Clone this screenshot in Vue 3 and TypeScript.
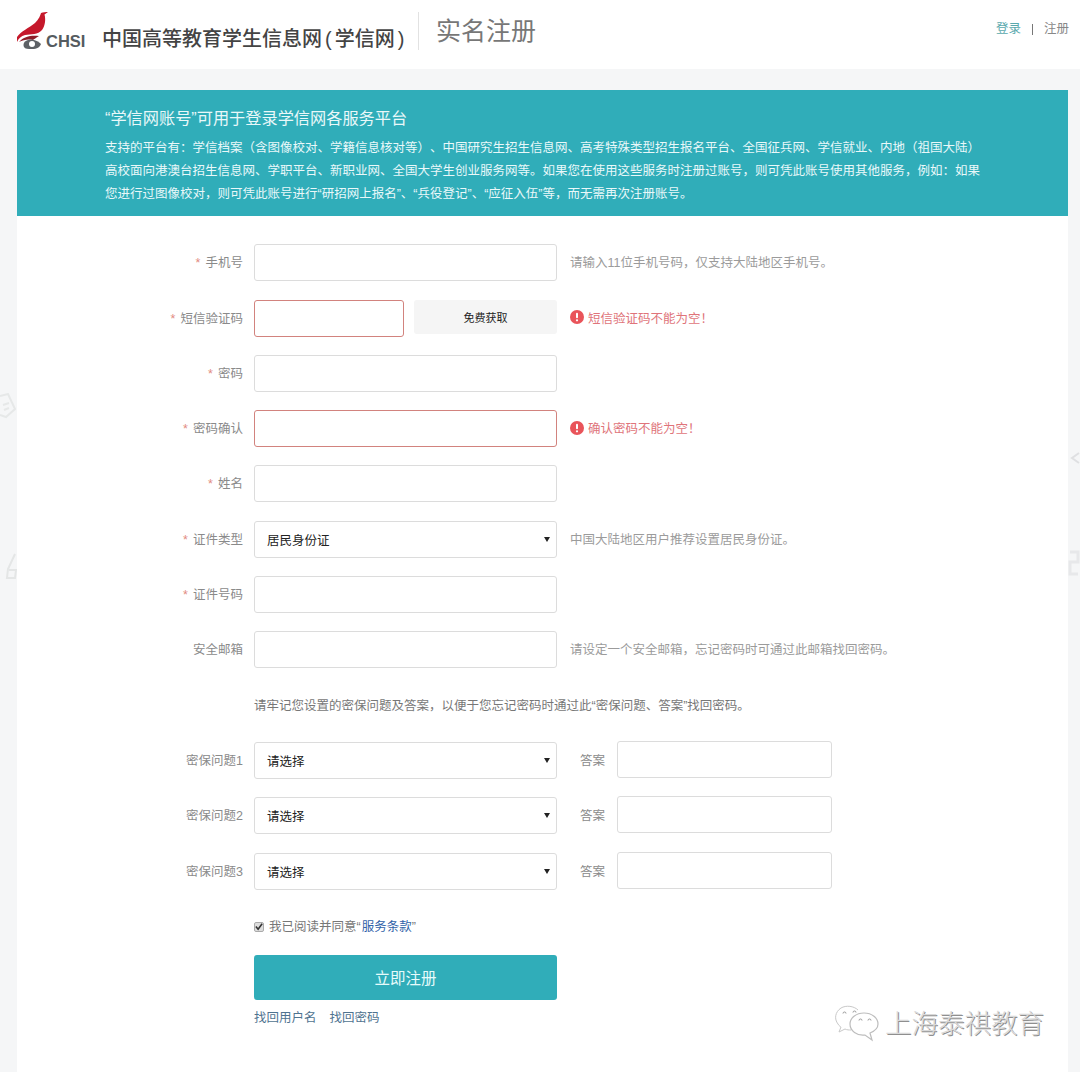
<script setup lang="ts">
interface Row {
  label: string
  required: boolean
  kind: 'input' | 'sms' | 'select'
  error?: boolean
  hint?: string
  errorText?: string
  value?: string
}
const rows: Row[] = [
  { label: '手机号', required: true, kind: 'input', hint: '请输入11位手机号码，仅支持大陆地区手机号。' },
  { label: '短信验证码', required: true, kind: 'sms', error: true, errorText: '短信验证码不能为空！' },
  { label: '密码', required: true, kind: 'input' },
  { label: '密码确认', required: true, kind: 'input', error: true, errorText: '确认密码不能为空！' },
  { label: '姓名', required: true, kind: 'input' },
  { label: '证件类型', required: true, kind: 'select', value: '居民身份证', hint: '中国大陆地区用户推荐设置居民身份证。' },
  { label: '证件号码', required: true, kind: 'input' },
  { label: '安全邮箱', required: false, kind: 'input', hint: '请设定一个安全邮箱，忘记密码时可通过此邮箱找回密码。' },
]
const questions = ['密保问题1', '密保问题2', '密保问题3']
</script>

<template>
  <div class="page">
    <header class="top">
      <div class="brand">
        <svg class="logo" width="74" height="40" viewBox="0 0 74 40">
          <path d="M2 26C6 20 14 17 20 12C24 8 25 5 26 2C28 1 31 1 33 1L29.500 3.500C31 9 30 15 27 19C23 24 16 23 10 24C6 25 4 27 2 31Z" fill="#c5182b" />
          <path d="M4 31C9 25 17 24 24 25C21 27 19 28 18 29C13 28 8 29 4 31Z" fill="#8d1d28" />
          <path d="M9 36C7 32 11 28 17 28.500C21 29 24 31 26 33C25 36 22 38 17 38C13 38 10 38 9 36Z" fill="#5d6165" />
          <circle cx="17" cy="33" r="3" fill="#fff" />
          <text x="31" y="36" class="chsi">CHSI</text>
        </svg>
        <span class="site">中国高等教育学生信息网<em>(</em>学信网<em>)</em></span>
        <span class="divider"></span>
        <span class="page-title">实名注册</span>
      </div>
      <nav class="nav">
        <a class="login">登录</a>
        <span class="sep"></span>
        <a class="reg">注册</a>
      </nav>
    </header>

    <main class="card">
      <section class="banner">
        <h1>“学信网账号”可用于登录学信网各服务平台</h1>
        <p>支持的平台有：学信档案（含图像校对、学籍信息核对等）、中国研究生招生信息网、高考特殊类型招生报名平台、全国征兵网、学信就业、内地（祖国大陆）</p>
        <p>高校面向港澳台招生信息网、学职平台、新职业网、全国大学生创业服务网等。如果您在使用这些服务时注册过账号，则可凭此账号使用其他服务，例如：如果</p>
        <p>您进行过图像校对，则可凭此账号进行“研招网上报名”、“兵役登记”、“应征入伍”等，而无需再次注册账号。</p>
      </section>

      <form class="form" @submit.prevent>
        <div class="rows main">
          <div v-for="r in rows" :key="r.label" class="row">
            <label class="label"><i v-if="r.required">*</i>{{ r.label }}</label>
            <div v-if="r.kind === 'sms'" class="field sms">
              <input class="input bad" type="text" />
              <button type="button" class="code">免费获取</button>
            </div>
            <div v-else-if="r.kind === 'select'" class="field select">
              <span>{{ r.value }}</span><b class="caret"></b>
            </div>
            <div v-else class="field">
              <input class="input" :class="{ bad: r.error }" type="text" />
            </div>
            <span v-if="r.hint" class="hint">{{ r.hint }}</span>
            <span v-if="r.errorText" class="err">
              <svg width="14" height="14" viewBox="0 0 14 14">
                <circle cx="7" cy="7" r="7" fill="#e9545a" />
                <rect x="6" y="2.800" width="2" height="5.400" rx="1" fill="#fff" />
                <circle cx="7" cy="10.300" r="1.100" fill="#fff" />
              </svg>
              {{ r.errorText }}
            </span>
          </div>
        </div>

        <p class="note">请牢记您设置的密保问题及答案，以便于您忘记密码时通过此“密保问题、答案”找回密码。</p>

        <div class="rows questions">
          <div v-for="q in questions" :key="q" class="row">
            <label class="label">{{ q }}</label>
            <div class="field select"><span>请选择</span><b class="caret"></b></div>
            <span class="answer-label">答案</span>
            <input class="input answer" type="text" />
          </div>
        </div>

        <div class="agree">
          <span class="check">
            <svg width="9" height="9" viewBox="0 0 9 9"><path d="M1 4.500L3.500 7.500L8 1.500" fill="none" stroke="#333" stroke-width="1.800" /></svg>
          </span>
          <span>我已阅读并同意“</span><span class="terms">服务条款</span><span>”</span>
        </div>
        <button type="button" class="submit">立即注册</button>
        <div class="links"><a>找回用户名</a><a>找回密码</a></div>
      </form>
    </main>

    <svg class="deco deco-l1" width="16" height="26" viewBox="0 0 16 26"><path d="M0 3L8 1L15 16L6 24L0 22" fill="none" stroke="#e6e8e8" stroke-width="2" /><path d="M3 12L9 10M4 17L9 15" stroke="#e6e8e8" stroke-width="2" /></svg>
    <svg class="deco deco-l2" width="12" height="28" viewBox="0 0 12 28"><path d="M10 1L3 16L2 25H10L11 17H4" fill="none" stroke="#e4e6e6" stroke-width="2" /></svg>
    <svg class="deco deco-r1" width="10" height="12" viewBox="0 0 10 12"><path d="M9 1L2 6L9 11" fill="none" stroke="#dfe0e2" stroke-width="2" /></svg>
    <svg class="deco deco-r2" width="12" height="30" viewBox="0 0 12 30"><path d="M2 2H10V12H2V24H10" fill="none" stroke="#e7e8ea" stroke-width="3" /></svg>

    <div class="mark">
      <svg width="46" height="38" viewBox="0 0 46 38">
        <path d="M24 5C20 1 12 0 7 3C1 7 0 14 4 19C5 21 7 22 7 22L5 27L11 24C13 25 15 25 17 25" fill="#fff" stroke="#c9c9c9" stroke-width="1" />
        <path d="M30 8C22 8 16 13 16 19C16 26 23 31 31 30L38 35L36 28C41 26 44 23 44 19C44 13 38 8 30 8Z" fill="#fff" stroke="#bdbdbd" stroke-width="1.200" />
        <path d="M9 8.500A1.500 1.500 0 0 1 12 8.500M19 7.500A1.500 1.500 0 0 1 22 7.500M25 15.500A1.500 1.500 0 0 1 28 15.500M34 15.500A1.500 1.500 0 0 1 37 15.500" fill="none" stroke="#999" stroke-width="1" />
      </svg>
      <span>上海泰祺教育</span>
    </div>
  </div>
</template>

<style>
html, body { margin: 0; background: #f5f6f7; }
</style>

<style scoped>
.page {
  position: relative;
  width: 1080px;
  height: 1072px;
  overflow: hidden;
  background: #f5f6f7;
  font-family: "Liberation Sans", "Noto Sans CJK SC", sans-serif;
  font-size: 12.500px;
  color: #888;
  text-spacing-trim: space-all;
}
.top {
  height: 69px;
  background: #fff;
  display: flex;
  justify-content: space-between;
  align-items: flex-start;
}
.brand { display: flex; align-items: flex-start; padding-left: 15px; }
.logo { margin-top: 11px; flex: none; }
.chsi { font: 700 16.500px "Liberation Sans", sans-serif; fill: #555b60; }
.site {
  margin-left: 13px;
  margin-top: 25px;
  font-size: 20px;
  line-height: 28px;
  font-weight: 500;
  color: #444;
  white-space: nowrap;
  width: 303px;
}
.site em { font-style: normal; margin: 0 3px; font-weight: 400; }
.divider { width: 1px; height: 38px; margin: 12px 0 0 13px; background: #e2e2e2; }
.page-title {
  margin: 13px 0 0 17px;
  font-size: 25px;
  line-height: 36px;
  color: #777;
  font-weight: 400;
}
.nav { display: flex; align-items: center; margin: 21px 11px 0 0; line-height: 16px; }
.login { color: #5aa9ad; }
.sep { width: 1px; height: 11px; background: #777; margin: 0 11px; }
.reg { color: #888; }
.card { margin: 21px 12px 0 17px; background: #fff; height: 982px; }
.banner {
  height: 126px;
  box-sizing: border-box;
  padding: 17px 0 0 88px;
  background: #30adb9;
  color: #e9f8f9;
}
.banner h1 { margin: 0 0 8px; font-size: 16.200px; line-height: 22px; font-weight: 400; white-space: nowrap; }
.banner p { margin: 0; font-size: 12.500px; line-height: 23px; white-space: nowrap; }
.form { padding-top: 28px; }
.rows { display: flex; flex-direction: column; gap: 18.220px; }
.questions { gap: 18.400px; }
.main .row:nth-child(2) { margin-top: 0.500px; }
.row { display: flex; align-items: center; height: 37px; }
.label { width: 226px; text-align: right; margin-right: 11px; padding-bottom: 2px; white-space: nowrap; color: #8a8a8a; }
.label i { font-style: normal; color: #e28a80; margin-right: 5px; }
.field { width: 303px; height: 37px; flex: none; }
.input {
  display: block;
  width: 100%;
  height: 37px;
  box-sizing: border-box;
  border: 1px solid #dcdcdc;
  border-radius: 3px;
  background: #fff;
  outline: none;
}
.input.bad { border-color: #d2837e; }
.sms { display: flex; justify-content: space-between; }
.sms .input { width: 150px; }
.code {
  width: 143px;
  height: 34px;
  border: 0;
  border-radius: 3px;
  background: #f5f5f5;
  color: #222;
  font: inherit;
  font-size: 11px;
  padding: 0;
}
.select {
  box-sizing: border-box;
  border: 1px solid #dcdcdc;
  border-radius: 3px;
  background: #fff;
  color: #222;
  display: flex;
  align-items: center;
  justify-content: space-between;
  padding: 0 6px 0 12px;
}
.caret { width: 0; height: 0; border: 3px solid transparent; border-top: 5px solid #222; border-bottom: 0; }
.hint { margin-left: 13px; padding-bottom: 2px; color: #9b9b9b; white-space: nowrap; }
.err {
  display: inline-flex;
  align-items: center;
  gap: 4px;
  margin-left: 13px;
  padding-bottom: 2px;
  color: #e0747a;
  white-space: nowrap;
}
.note { margin: 29px 0 27px 237px; line-height: 18px; color: #777; white-space: nowrap; }
.answer-label { width: 48px; text-align: right; flex: none; margin-right: 12px; padding-bottom: 2px; color: #8a8a8a; }
.answer { width: 215px; flex: none; margin-bottom: 2px; }
.agree { margin: 28px 0 0 237px; display: flex; align-items: center; line-height: 18px; color: #777; height: 18px; white-space: nowrap; }
.check {
  width: 10px;
  height: 10px;
  box-sizing: border-box;
  border: 1px solid #aaa;
  border-radius: 2px;
  background: #ddd;
  margin-right: 5px;
  display: flex;
  align-items: center;
  justify-content: center;
}
.terms { color: #2f62a8; margin-left: 1px; }
.submit {
  display: block;
  width: 303px;
  height: 45px;
  margin: 19px 0 0 237px;
  border: 0;
  border-radius: 3px;
  background: #30adb9;
  color: #e6fbfb;
  font: inherit;
  font-size: 15.500px;
  padding: 0;
}
.links { margin: 9px 0 0 237px; display: flex; gap: 13px; line-height: 18px; color: #4f7390; }
.deco { position: absolute; }
.deco-l1 { left: 0; top: 393px; }
.deco-l2 { left: 5px; top: 553px; }
.deco-r1 { left: 1070px; top: 452px; }
.deco-r2 { left: 1068px; top: 550px; }
.mark {
  position: absolute;
  left: 834px;
  top: 1005px;
  display: flex;
  align-items: center;
  gap: 5px;
}
.mark span {
  font-size: 26.500px;
  line-height: 38px;
  font-weight: 300;
  color: #d9d9d9;
  text-shadow: 1px 1px 0 #8f8f8f;
  white-space: nowrap;
}
</style>
